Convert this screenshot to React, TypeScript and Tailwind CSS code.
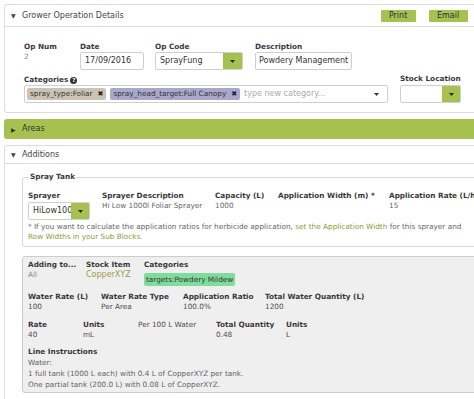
import { ReactNode } from 'react';

const green = 'bg-[#a6c150]';

function Label({ children, className = '' }: { children: ReactNode; className?: string }) {
  return <div className={`h-[10px] leading-[10px] font-bold text-[#3a3a3a] whitespace-nowrap ${className}`}>{children}</div>;
}

function Value({ children, className = '' }: { children: ReactNode; className?: string }) {
  return <div className={`h-[10px] leading-[10px] text-[#4e4e4e] whitespace-nowrap ${className}`}>{children}</div>;
}

function Caret({ dark = false }: { dark?: boolean }) {
  return (
    <svg width="5" height="3" viewBox="0 0 5 3" className={dark ? 'fill-[#333]' : 'fill-[#2a2a2a]'}>
      <path d="M0 0h5L2.5 3z" />
    </svg>
  );
}

function Select({ value, width, arrow = 18 }: { value: string; width: number; arrow?: number }) {
  return (
    <div className="flex h-[18px] border border-[#cfcfcf] rounded-[2px] bg-white overflow-hidden" style={{ width }}>
      <div className="flex-1 px-[4px] text-[8px] leading-[16px] text-[#333] whitespace-nowrap overflow-hidden">{value}</div>
      <div className={`${green} flex items-center justify-center`} style={{ width: arrow }}>
        <Caret />
      </div>
    </div>
  );
}

function Tag({ text, color }: { text: string; color: string }) {
  return (
    <div className={`flex items-center h-[12px] px-[3px] gap-[5px] rounded-[2px] ${color} text-[7.3px] text-[#333] whitespace-nowrap`}>
      <span>{text}</span>
      <span className="font-bold text-[7px] text-[#222]">✖</span>
    </div>
  );
}

export default function App() {
  return (
    <div className="w-[474px] h-[399px] overflow-hidden bg-white text-[7.3px]" style={{ fontFamily: '"DejaVu Sans", Verdana, sans-serif' }}>
      <div className="w-[520px] pl-[4px] pt-[4px]">
        {/* Grower Operation Details */}
        <div className="border border-[#dcdcdc] rounded-[3px]">
          <div className="h-[22px] border-b border-[#dcdcdc] flex items-center">
            <span className="w-[17px] pl-[6px] text-[6px] text-[#444]">▼</span>
            <span className="text-[8px] text-[#444]">Grower Operation Details</span>
            <div className="ml-[257px] flex gap-[13px]">
              <div className={`${green} h-[12px] w-[35px] rounded-[1px] text-[8px] leading-[12px] text-center text-[#333]`}>Print</div>
              <div className={`${green} h-[12px] w-[39px] rounded-[1px] text-[8px] leading-[12px] text-center text-[#333]`}>Email</div>
            </div>
          </div>
          <div className="pl-[19px] pt-[15px] pb-[9px]">
            <div className="flex">
              <div className="w-[56px]">
                <Label>Op Num</Label>
                <Value className="text-[#888]">2</Value>
              </div>
              <div className="w-[75px]">
                <Label>Date</Label>
                <div className="w-[64px] h-[18px] border border-[#cfcfcf] rounded-[2px] px-[4px] text-[8px] leading-[16px] text-[#333]">17/09/2016</div>
              </div>
              <div className="w-[100px]">
                <Label>Op Code</Label>
                <Select value="SprayFung" width={88} arrow={19} />
              </div>
              <div>
                <Label>Description</Label>
                <div className="w-[97px] h-[18px] border border-[#cfcfcf] rounded-[2px] px-[3px] text-[8px] leading-[16px] text-[#333] whitespace-nowrap overflow-hidden">Powdery Management</div>
              </div>
            </div>
            <div className="flex items-end mt-[4px]">
              <div className="w-[376px]">
                <Label className="flex items-center gap-[2px]">
                  Categories
                  <span className="w-[7px] h-[7px] rounded-full bg-[#333] text-white text-[5.5px] leading-[7px] text-center">?</span>
                </Label>
                <div className="w-[364px] h-[18px] border border-[#cfcfcf] rounded-[2px] flex items-center pl-[2px] gap-[4px]">
                  <Tag text="spray_type:Foliar" color="bg-[#cbc4b6]" />
                  <Tag text="spray_head_target:Full Canopy" color="bg-[#a9a8cc]" />
                  <span className="text-[8px] text-[#aaa] whitespace-nowrap">type new category...</span>
                  <span className="ml-auto mr-[8px] flex"><Caret dark /></span>
                </div>
              </div>
              <div>
                <Label>Stock Location</Label>
                <div className="mt-[1px]">
                  <Select value="" width={61} arrow={18} />
                </div>
              </div>
            </div>
          </div>
        </div>

        {/* Areas */}
        <div className={`${green} mt-[6px] h-[20px] rounded-[3px] flex items-center`}>
          <span className="w-[18px] pl-[7px] text-[6px] text-[#333]">▶</span>
          <span className="text-[8px] text-[#333]">Areas</span>
        </div>

        {/* Additions */}
        <div className="mt-[6px] border border-[#dcdcdc] rounded-[3px] h-[260px]">
          <div className="h-[18px] border-b border-[#dcdcdc] flex items-center">
            <span className="w-[17px] pl-[6px] text-[6px] text-[#444]">▼</span>
            <span className="text-[8px] text-[#444]">Additions</span>
          </div>
          <div className="pl-[17px] pt-[8px]">
            <fieldset className="border border-[#d8d8d8] rounded-[3px] px-[5px] pb-[4px]">
              <legend className="ml-[1px] px-[1px] font-bold text-[#3a3a3a] leading-[10px]">Spray Tank</legend>
              <div className="flex pt-[9px]">
                <div className="w-[74px]">
                  <Label>Sprayer</Label>
                  <div className="mt-[1px]">
                    <Select value="HiLow100" width={62} arrow={18} />
                  </div>
                </div>
                <div className="w-[113px]">
                  <Label>Sprayer Description</Label>
                  <Value className="text-[#666]">Hi Low 1000l Foliar Sprayer</Value>
                </div>
                <div className="w-[63px]">
                  <Label>Capacity (L)</Label>
                  <Value className="text-[#666]">1000</Value>
                </div>
                <div className="w-[111px]">
                  <Label>Application Width (m) *</Label>
                </div>
                <div>
                  <Label>Application Rate (L/ha)</Label>
                  <Value className="text-[#666]">15</Value>
                </div>
              </div>
              <div className="mt-[2px] leading-[10px] text-[#666] whitespace-nowrap">
                <div>
                  * If you want to calculate the application ratios for herbicide application,{' '}
                  <span className="text-[#8a9b3a]">set the Application Width</span> for this sprayer and
                </div>
                <div className="text-[#8a9b3a]">Row Widths in your Sub Blocks.</div>
              </div>
            </fieldset>

            {/* Addition line */}
            <div className="mt-[9px] h-[137px] bg-[#efefef] border border-[#cccccc] rounded-[3px] px-[5px] pt-[3px]">
              <div className="flex">
                <div className="w-[58px]">
                  <Label>Adding to...</Label>
                  <Value className="text-[#888]">All</Value>
                </div>
                <div className="w-[58px]">
                  <Label>Stock Item</Label>
                  <div className="h-[10px] leading-[10px] text-[8px] text-[#9a9d4a]">CopperXYZ</div>
                </div>
                <div>
                  <Label>Categories</Label>
                  <div className="mt-[3px] h-[13px] px-[2px] rounded-[2px] bg-[#7fdc9c] text-[#333] leading-[13px] whitespace-nowrap w-fit">targets:Powdery Mildew</div>
                </div>
              </div>
              <div className="flex mt-[6px]">
                <div className="w-[73px]">
                  <Label>Water Rate (L)</Label>
                  <Value>100</Value>
                </div>
                <div className="w-[82px]">
                  <Label>Water Rate Type</Label>
                  <Value>Per Area</Value>
                </div>
                <div className="w-[82px]">
                  <Label>Application Ratio</Label>
                  <Value>100.0%</Value>
                </div>
                <div>
                  <Label>Total Water Quantity (L)</Label>
                  <Value>1200</Value>
                </div>
              </div>
              <div className="flex mt-[8px]">
                <div className="w-[55px]">
                  <Label>Rate</Label>
                  <Value>40</Value>
                </div>
                <div className="w-[55px]">
                  <Label>Units</Label>
                  <Value>mL</Value>
                </div>
                <div className="w-[78px]">
                  <Value>Per 100 L Water</Value>
                </div>
                <div className="w-[70px]">
                  <Label>Total Quantity</Label>
                  <Value>0.48</Value>
                </div>
                <div>
                  <Label>Units</Label>
                  <Value>L</Value>
                </div>
              </div>
              <div className="mt-[7px]">
                <Label>Line Instructions</Label>
                <div className="leading-[11px] text-[#666] whitespace-nowrap">
                  <div>Water:</div>
                  <div>1 full tank (1000 L each) with 0.4 L of CopperXYZ per tank.</div>
                  <div>One partial tank (200.0 L) with 0.08 L of CopperXYZ.</div>
                </div>
              </div>
            </div>
          </div>
        </div>
      </div>
    </div>
  );
}
